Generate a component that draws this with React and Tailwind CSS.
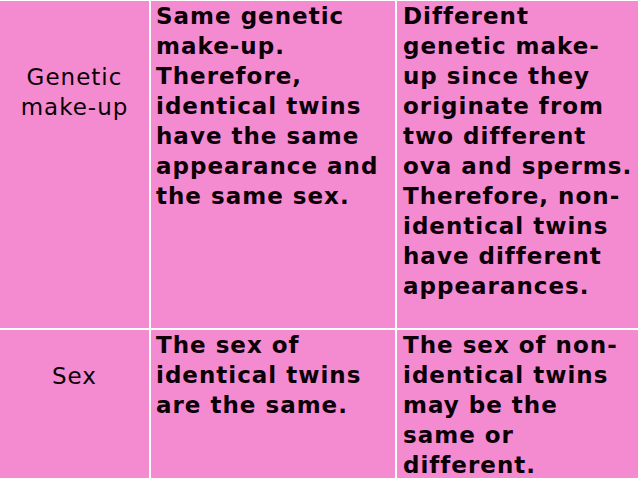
const rows = [
  {
    label: ['Genetic', 'make-up'],
    labelPad: 'pt-[61px]',
    same: ['Same genetic', 'make-up.', 'Therefore,', 'identical twins', 'have the same', 'appearance and', 'the same sex.'],
    diff: ['Different', 'genetic make-', 'up since they', 'originate from', 'two different', 'ova and sperms.', 'Therefore, non-', 'identical twins', 'have different', 'appearances.'],
  },
  {
    label: ['Sex'],
    labelPad: 'pt-[31px]',
    same: ['The sex of', 'identical twins', 'are the same.'],
    diff: ['The sex of non-', 'identical twins', 'may be the', 'same or', 'different.'],
  },
];

function Lines({ lines }) {
  return lines.map((l) => (
    <div key={l} className="whitespace-nowrap">
      {l}
    </div>
  ));
}

export default function App() {
  return (
    <div className="h-[478px] w-[638px] overflow-hidden bg-white pt-px font-['DejaVu_Sans',Verdana,sans-serif] text-[#0b0006]">
      <div className="grid h-full grid-cols-[149px_244px_1fr] grid-rows-[327px_1fr] gap-[2px]">
        {rows.map((r) => (
          <>
            <div key={r.label[0] + 'a'} className={`bg-[#f48bd1] text-center text-[23px] leading-[30px] tracking-[1px] ${r.labelPad}`}>
              <Lines lines={r.label} />
            </div>
            <div key={r.label[0] + 'b'} className="bg-[#f48bd1] pl-[5px] text-[23px] font-bold leading-[30px] tracking-[1px]">
              <Lines lines={r.same} />
            </div>
            <div key={r.label[0] + 'c'} className="bg-[#f48bd1] pl-[6px] text-[23px] font-bold leading-[30px] tracking-[1px]">
              <Lines lines={r.diff} />
            </div>
          </>
        ))}
      </div>
    </div>
  );
}
